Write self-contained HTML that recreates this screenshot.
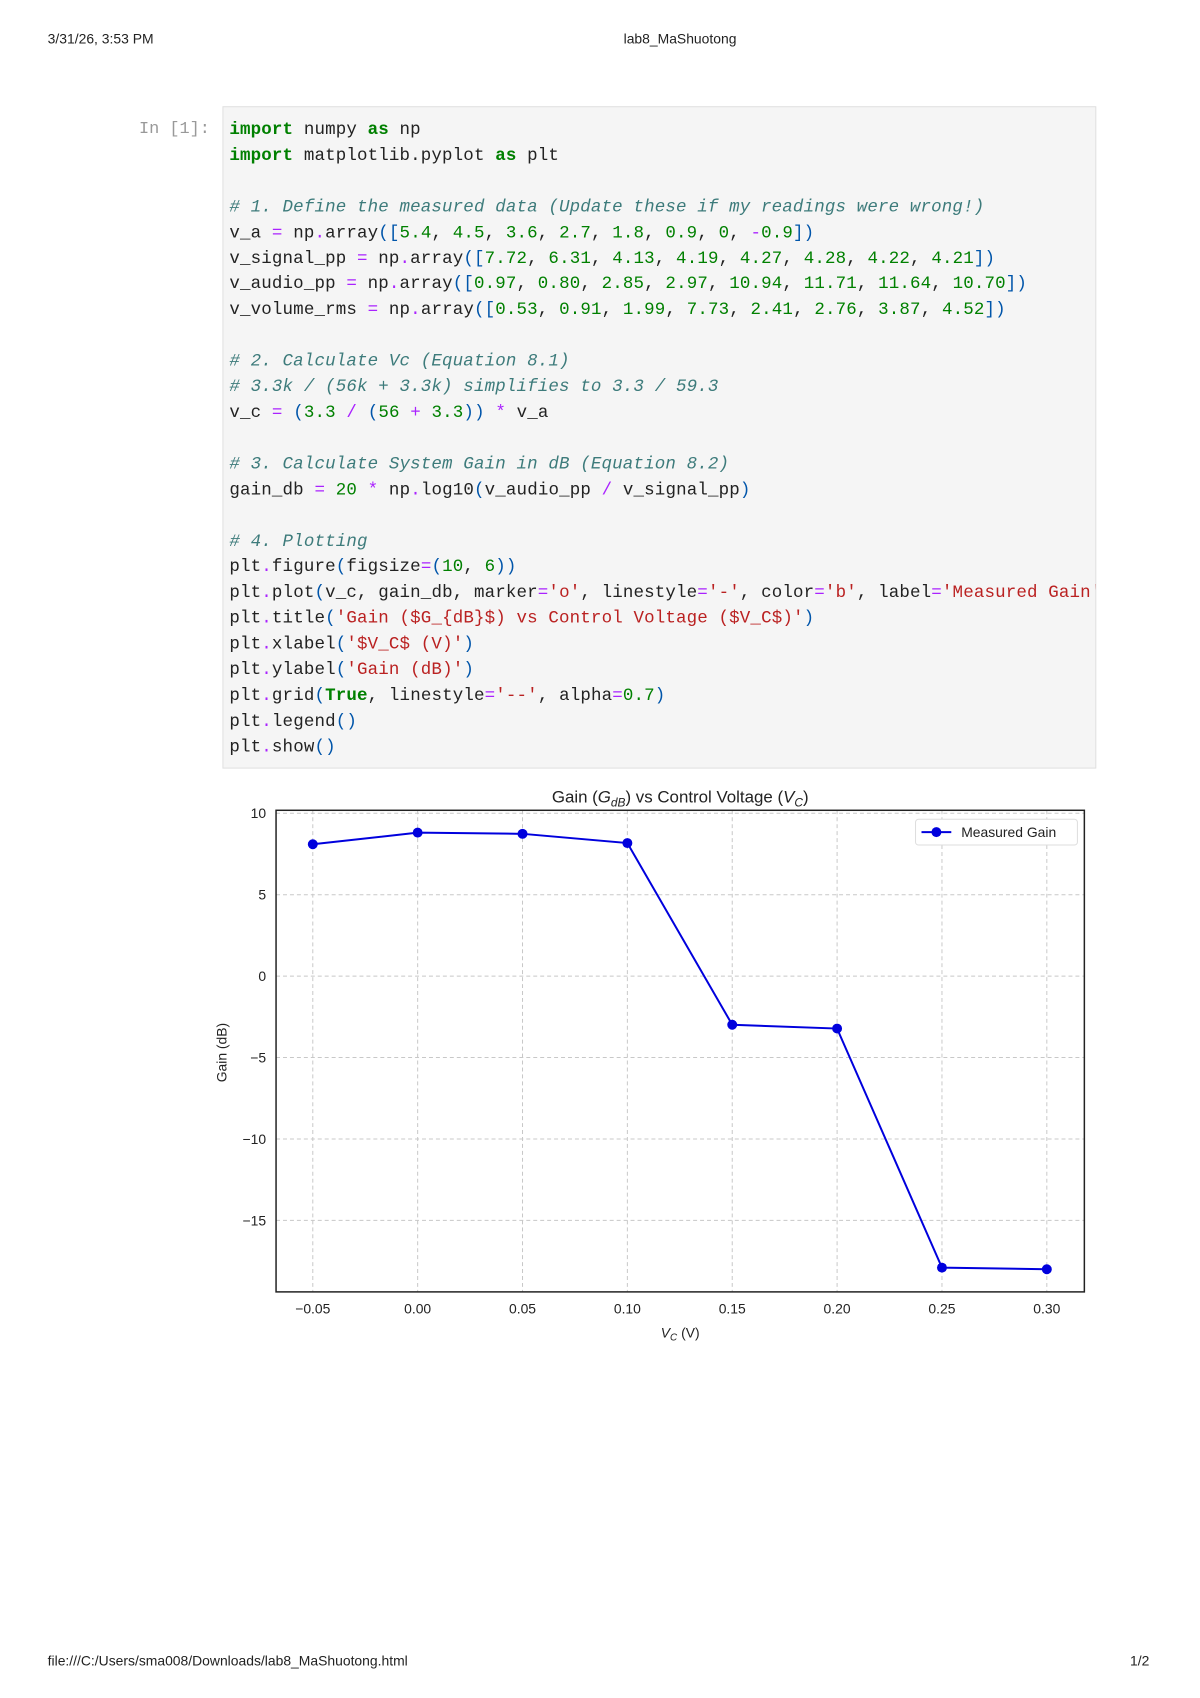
<!DOCTYPE html>
<html><head><meta charset="utf-8"><style>
body{margin:0;width:1200px;height:1698px;background:#fff;position:relative;font-family:"Liberation Sans",sans-serif;overflow:hidden}
#w{position:absolute;left:0;top:0;width:1200px;height:1698px;transform:scale(0.993);transform-origin:0 0}
.hd{position:absolute;font-size:14px;color:#222}
.cell{position:absolute;left:224px;top:107px;width:878px;height:665px;background:#f5f5f5;border:1px solid #e0e0e0;overflow:hidden}
.prompt{position:absolute;left:140px;top:118px;font-family:"Liberation Mono",monospace;font-size:17px;color:#999;line-height:26px}
pre{margin:0;position:absolute;left:6px;top:11px;font-family:"Liberation Mono",monospace;font-size:17.6px;line-height:25.9px;color:#222;white-space:pre;letter-spacing:0.15px}
.k{color:#008000;font-weight:bold}.n{color:#008000}.o{color:#AA22FF}.p{color:#0055AA}.s{color:#BA2121}.c{color:#3D7B7B;font-style:italic}
</style></head><body><div id="w">
<div class="hd" style="left:48px;top:31px">3/31/26, 3:53 PM</div>
<div class="hd" style="left:628px;top:31px">lab8_MaShuotong</div>
<div class="prompt">In [1]:</div>
<div class="cell"><pre><span class="k">import</span> numpy <span class="k">as</span> np
<span class="k">import</span> matplotlib.pyplot <span class="k">as</span> plt

<span class="c"># 1. Define the measured data (Update these if my readings were wrong!)</span>
v_a <span class="o">=</span> np<span class="o">.</span>array<span class="p">([</span><span class="n">5.4</span>, <span class="n">4.5</span>, <span class="n">3.6</span>, <span class="n">2.7</span>, <span class="n">1.8</span>, <span class="n">0.9</span>, <span class="n">0</span>, <span class="o">-</span><span class="n">0.9</span><span class="p">])</span>
v_signal_pp <span class="o">=</span> np<span class="o">.</span>array<span class="p">([</span><span class="n">7.72</span>, <span class="n">6.31</span>, <span class="n">4.13</span>, <span class="n">4.19</span>, <span class="n">4.27</span>, <span class="n">4.28</span>, <span class="n">4.22</span>, <span class="n">4.21</span><span class="p">])</span>
v_audio_pp <span class="o">=</span> np<span class="o">.</span>array<span class="p">([</span><span class="n">0.97</span>, <span class="n">0.80</span>, <span class="n">2.85</span>, <span class="n">2.97</span>, <span class="n">10.94</span>, <span class="n">11.71</span>, <span class="n">11.64</span>, <span class="n">10.70</span><span class="p">])</span>
v_volume_rms <span class="o">=</span> np<span class="o">.</span>array<span class="p">([</span><span class="n">0.53</span>, <span class="n">0.91</span>, <span class="n">1.99</span>, <span class="n">7.73</span>, <span class="n">2.41</span>, <span class="n">2.76</span>, <span class="n">3.87</span>, <span class="n">4.52</span><span class="p">])</span>

<span class="c"># 2. Calculate Vc (Equation 8.1)</span>
<span class="c"># 3.3k / (56k + 3.3k) simplifies to 3.3 / 59.3</span>
v_c <span class="o">=</span> <span class="p">(</span><span class="n">3.3</span> <span class="o">/</span> <span class="p">(</span><span class="n">56</span> <span class="o">+</span> <span class="n">3.3</span><span class="p">))</span> <span class="o">*</span> v_a

<span class="c"># 3. Calculate System Gain in dB (Equation 8.2)</span>
gain_db <span class="o">=</span> <span class="n">20</span> <span class="o">*</span> np<span class="o">.</span>log10<span class="p">(</span>v_audio_pp <span class="o">/</span> v_signal_pp<span class="p">)</span>

<span class="c"># 4. Plotting</span>
plt<span class="o">.</span>figure<span class="p">(</span>figsize<span class="o">=</span><span class="p">(</span><span class="n">10</span>, <span class="n">6</span><span class="p">))</span>
plt<span class="o">.</span>plot<span class="p">(</span>v_c, gain_db, marker<span class="o">=</span><span class="s">'o'</span>, linestyle<span class="o">=</span><span class="s">'-'</span>, color<span class="o">=</span><span class="s">'b'</span>, label<span class="o">=</span><span class="s">'Measured Gain'</span><span class="p">)</span>
plt<span class="o">.</span>title<span class="p">(</span><span class="s">'Gain ($G_{dB}$) vs Control Voltage ($V_C$)'</span><span class="p">)</span>
plt<span class="o">.</span>xlabel<span class="p">(</span><span class="s">'$V_C$ (V)'</span><span class="p">)</span>
plt<span class="o">.</span>ylabel<span class="p">(</span><span class="s">'Gain (dB)'</span><span class="p">)</span>
plt<span class="o">.</span>grid<span class="p">(</span><span class="k">True</span>, linestyle<span class="o">=</span><span class="s">'--'</span>, alpha<span class="o">=</span><span class="n">0.7</span><span class="p">)</span>
plt<span class="o">.</span>legend<span class="p">()</span>
plt<span class="o">.</span>show<span class="p">()</span></pre></div>

<svg style="position:absolute;left:0;top:0" width="1200" height="1698" font-family="Liberation Sans, sans-serif">
<g stroke="#c8c8c8" stroke-width="1" stroke-dasharray="4,3">
<line x1="315" y1="816" x2="315" y2="1301"/><line x1="420.6" y1="816" x2="420.6" y2="1301"/><line x1="526.2" y1="816" x2="526.2" y2="1301"/><line x1="631.8" y1="816" x2="631.8" y2="1301"/><line x1="737.4" y1="816" x2="737.4" y2="1301"/><line x1="843" y1="816" x2="843" y2="1301"/><line x1="948.6" y1="816" x2="948.6" y2="1301"/><line x1="1054.2" y1="816" x2="1054.2" y2="1301"/>
<line x1="278" y1="819" x2="1092" y2="819"/><line x1="278" y1="901" x2="1092" y2="901"/><line x1="278" y1="983" x2="1092" y2="983"/><line x1="278" y1="1065" x2="1092" y2="1065"/><line x1="278" y1="1147" x2="1092" y2="1147"/><line x1="278" y1="1229" x2="1092" y2="1229"/>
</g>
<rect x="278" y="816" width="814" height="485" fill="none" stroke="#222" stroke-width="1.5"/>
<polyline fill="none" stroke="#0000dd" stroke-width="2" points="315,850.2 420.6,838.5 526.2,839.7 631.8,849 737.4,1032 843,1035.8 948.6,1276.6 1054.2,1278.2"/>
<g fill="#0000dd"><circle cx="315" cy="850.2" r="5"/><circle cx="420.6" cy="838.5" r="5"/><circle cx="526.2" cy="839.7" r="5"/><circle cx="631.8" cy="849" r="5"/><circle cx="737.4" cy="1032" r="5"/><circle cx="843" cy="1035.8" r="5"/><circle cx="948.6" cy="1276.6" r="5"/><circle cx="1054.2" cy="1278.2" r="5"/></g>
<g font-size="14" fill="#222" text-anchor="end">
<text x="268" y="824">10</text><text x="268" y="906">5</text><text x="268" y="988">0</text><text x="268" y="1070">−5</text><text x="268" y="1152">−10</text><text x="268" y="1234">−15</text></g>
<g font-size="14" fill="#222" text-anchor="middle">
<text x="315" y="1323">−0.05</text><text x="420.6" y="1323">0.00</text><text x="526.2" y="1323">0.05</text><text x="631.8" y="1323">0.10</text><text x="737.4" y="1323">0.15</text><text x="843" y="1323">0.20</text><text x="948.6" y="1323">0.25</text><text x="1054.2" y="1323">0.30</text>
<text x="685" y="1347"><tspan font-style="italic">V</tspan><tspan font-size="10" dy="3" font-style="italic">C</tspan><tspan dy="-3"> (V)</tspan></text>
<text x="685" y="808" font-size="17">Gain (<tspan font-style="italic">G</tspan><tspan font-size="12" dy="4" font-style="italic">dB</tspan><tspan dy="-4">) vs Control Voltage (</tspan><tspan font-style="italic">V</tspan><tspan font-size="12" dy="4" font-style="italic">C</tspan><tspan dy="-4">)</tspan></text>
<text transform="translate(228,1060) rotate(-90)">Gain (dB)</text>
</g>
<rect x="922" y="825" width="163" height="26" rx="3" fill="#fff" stroke="#ddd"/>
<line x1="928" y1="838" x2="958" y2="838" stroke="#0000dd" stroke-width="2"/><circle cx="943" cy="838" r="5" fill="#0000dd"/>
<text x="968" y="843" font-size="14" fill="#222">Measured Gain</text>
</svg>
<div class="hd" style="left:48px;top:1664px">file:///C:/Users/sma008/Downloads/lab8_MaShuotong.html</div>
<div class="hd" style="left:1138px;top:1664px">1/2</div>
</div></body></html>
